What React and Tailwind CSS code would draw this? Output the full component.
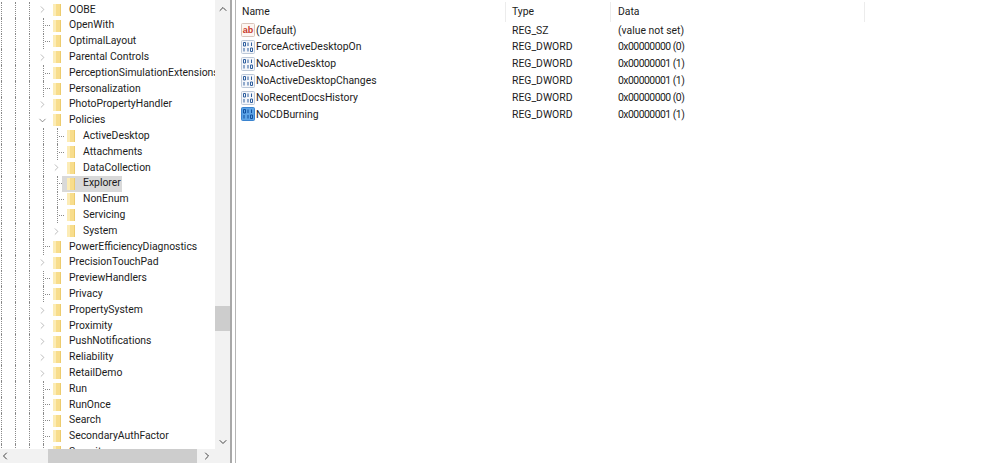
import { ChevronUp, ChevronDown, ChevronLeft, ChevronRight } from "lucide-react";

const font = "font-['Roboto',sans-serif]";

// level 0 = direct children of Windows, level 1 = children of Policies
const keys = [
  { name: "OOBE", level: 0, arrow: "closed" },
  { name: "OpenWith", level: 0 },
  { name: "OptimalLayout", level: 0 },
  { name: "Parental Controls", level: 0, arrow: "closed" },
  { name: "PerceptionSimulationExtensions", level: 0 },
  { name: "Personalization", level: 0 },
  { name: "PhotoPropertyHandler", level: 0, arrow: "closed" },
  { name: "Policies", level: 0, arrow: "open" },
  { name: "ActiveDesktop", level: 1 },
  { name: "Attachments", level: 1 },
  { name: "DataCollection", level: 1, arrow: "closed" },
  { name: "Explorer", level: 1, selected: true },
  { name: "NonEnum", level: 1 },
  { name: "Servicing", level: 1 },
  { name: "System", level: 1, arrow: "closed" },
  { name: "PowerEfficiencyDiagnostics", level: 0 },
  { name: "PrecisionTouchPad", level: 0, arrow: "closed" },
  { name: "PreviewHandlers", level: 0 },
  { name: "Privacy", level: 0 },
  { name: "PropertySystem", level: 0, arrow: "closed" },
  { name: "Proximity", level: 0, arrow: "closed" },
  { name: "PushNotifications", level: 0, arrow: "closed" },
  { name: "Reliability", level: 0, arrow: "closed" },
  { name: "RetailDemo", level: 0, arrow: "closed" },
  { name: "Run", level: 0 },
  { name: "RunOnce", level: 0 },
  { name: "Search", level: 0 },
  { name: "SecondaryAuthFactor", level: 0 },
  { name: "Security", level: 0 },
];

const values = [
  { name: "(Default)", type: "REG_SZ", data: "(value not set)", icon: "ab" },
  { name: "ForceActiveDesktopOn", type: "REG_DWORD", data: "0x00000000 (0)" },
  { name: "NoActiveDesktop", type: "REG_DWORD", data: "0x00000001 (1)" },
  { name: "NoActiveDesktopChanges", type: "REG_DWORD", data: "0x00000001 (1)" },
  { name: "NoRecentDocsHistory", type: "REG_DWORD", data: "0x00000000 (0)" },
  { name: "NoCDBurning", type: "REG_DWORD", data: "0x00000001 (1)", active: true },
];

function Folder() {
  return (
    <svg width="8" height="12" viewBox="0 0 8 12" className="shrink-0">
      <rect x="0" y="0" width="8" height="12" fill="#f8dd8c" />
      <rect x="0" y="0" width="3" height="12" fill="#fcecb6" />
      <rect x="7" y="0" width="1" height="12" fill="#eccb6e" />
    </svg>
  );
}

function Guide() {
  return <div className="w-[14px] h-full shrink-0 border-l border-dotted border-[#8a8a8a]" />;
}

function TreeRow({ item }) {
  const guides = item.level === 1 ? [0, 1, 2, 3] : [0, 1, 2];
  return (
    <div className="flex items-center h-[15.81px] pl-px">
      {guides.map((g) => (
        <Guide key={g} />
      ))}
      {item.arrow ? (
        <div className="w-[10px] shrink-0 flex items-center">
          {item.arrow === "open" ? (
            <ChevronDown size={11} strokeWidth={1.6} className="-ml-[6px] shrink-0 text-[#666]" />
          ) : (
            <ChevronRight size={11} strokeWidth={1.4} className="-ml-[6px] shrink-0 text-[#999]" />
          )}
        </div>
      ) : (
        <div className="w-[10px] h-full shrink-0 flex items-center border-l border-dotted border-[#8a8a8a]">
          <div className="w-[5px] border-t border-dotted border-[#8a8a8a] ml-px" />
        </div>
      )}
      <div className={`flex items-center h-full ${item.selected ? "bg-[#d9d9d9] -ml-[5px] pl-[5px]" : ""}`}>
        <Folder />
        <span className="ml-[8px] pr-[1px] text-[10.4px] leading-none whitespace-nowrap text-[#1c1c1c]">{item.name}</span>
      </div>
    </div>
  );
}

function ValueIcon({ icon, active }) {
  if (icon === "ab") {
    return (
      <svg width="14" height="14" viewBox="0 0 14 14" className="shrink-0">
        <rect x="0.5" y="0.5" width="13" height="13" rx="1" fill="#fdf6f2" stroke="#d9c4ba" />
        <text x="7" y="10" textAnchor="middle" fontSize="9" fontWeight="700" fontFamily="Liberation Sans" fill="#c8392b">
          ab
        </text>
      </svg>
    );
  }
  const ink = active ? "#0f4f9e" : "#2f5f9e";
  return (
    <svg width="14" height="14" viewBox="0 0 14 14" className="shrink-0">
      <rect x="0.5" y="0.5" width="13" height="13" rx="1" fill={active ? "#5da4e6" : "#f4f6fa"} stroke={active ? "#3a83cf" : "#bcc8d8"} />
      {/* 011 over 110 */}
      <path d="M2.5 2.5h2v3.5h-2zM7 2.5v3.5M10.5 2.5v3.5M3 8v3.5M7 8v3.5M9.5 8h2v3.5h-2z" fill="none" stroke={ink} strokeWidth="1" />
    </svg>
  );
}

function ScrollButton({ children }) {
  return <div className="flex items-center justify-center shrink-0 text-[#444]">{children}</div>;
}

export default function App() {
  return (
    <div className={`flex flex-col w-[1000px] h-[464px] bg-white overflow-hidden ${font}`}>
      <div className="flex flex-1 min-h-0">
        {/* Key tree */}
        <div className="flex w-[230px] shrink-0">
          <div className="w-[215px] overflow-hidden pt-[2px]">
            {keys.map((k) => (
              <TreeRow key={k.name} item={k} />
            ))}
          </div>
          <div className="w-[15px] flex flex-col bg-[#f2f2f2]">
            <ScrollButton>
              <ChevronUp size={12} strokeWidth={2} className="mt-[3px] mb-[2px]" />
            </ScrollButton>
            <div className="h-[289px]" />
            <div className="h-[25px] bg-[#cdcdcd]" />
            <div className="flex-1" />
            <ScrollButton>
              <ChevronDown size={12} strokeWidth={2} className="my-[1px]" />
            </ScrollButton>
          </div>
        </div>

        <div className="w-[6px] shrink-0 bg-white border-l-2 border-r border-l-[#a8a8a8] border-r-[#b5b5b5]" />

        {/* Values list */}
        <div className="flex-1 min-w-0 text-[10.4px] text-[#1c1c1c]">
          <div className="flex h-[22px] pt-[2px] items-center">
            <div className="w-[270px] h-full flex items-center pl-[6px] border-r border-[#ececec]">Name</div>
            <div className="w-[105px] h-full flex items-center pl-[6px] border-r border-[#ececec]">Type</div>
            <div className="w-[254px] h-full flex items-center pl-[7px] border-r border-[#ececec]">Data</div>
          </div>
          {values.map((v) => (
            <div key={v.name} className="flex items-center h-[16.8px]">
              <div className="w-[270px] flex items-center pl-[5px] gap-[1px]">
                <ValueIcon icon={v.icon} active={v.active} />
                <span className="whitespace-nowrap">{v.name}</span>
              </div>
              <div className="w-[105px] pl-[6px]">{v.type}</div>
              <div className={`pl-[7px] ${v.icon ? "" : "tracking-[-0.5px]"}`}>{v.data}</div>
            </div>
          ))}
        </div>
      </div>

      {/* Tree horizontal scrollbar */}
      <div className="flex h-[14px] shrink-0 mb-px">
        <div className="w-[215px] flex items-center bg-[#f2f2f2]">
          <ChevronLeft size={12} strokeWidth={2} className="text-[#444] ml-[-1px]" />
          <div className="w-[37px]" />
          <div className="w-[149px] h-full bg-[#cdcdcd]" />
          <div className="flex-1" />
          <ChevronRight size={12} strokeWidth={2} className="text-[#444] mr-[2px]" />
        </div>
        <div className="w-[15px] bg-[#f2f2f2]" />
        <div className="w-[6px] shrink-0 bg-white border-l-2 border-r border-l-[#a8a8a8] border-r-[#b5b5b5]" />
      </div>
    </div>
  );
}
